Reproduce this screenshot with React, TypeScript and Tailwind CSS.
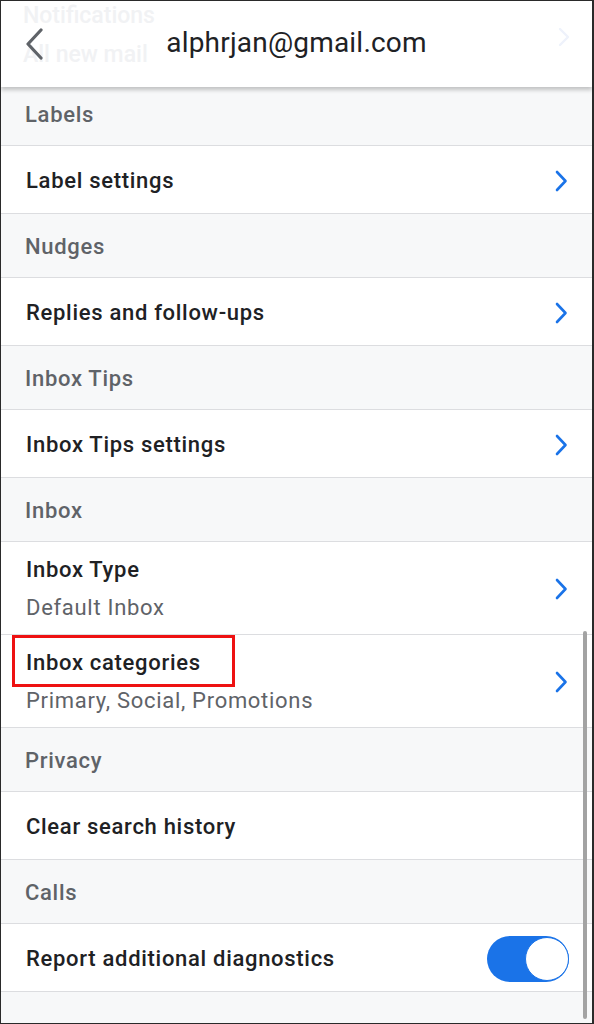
import React from "react";

const font = { fontFamily: "Roboto, 'Noto Sans', sans-serif" };

function Chevron() {
  return (
    <svg width="14" height="22" viewBox="0 0 14 22" fill="none" className="shrink-0">
      <path d="M3 2 L11.5 11 L3 20" stroke="#1a73e8" strokeWidth="2.6" strokeLinecap="round" strokeLinejoin="round" />
    </svg>
  );
}

function Section({ title }: { title: string }) {
  return (
    <div className="h-[64px] flex items-center px-[24px] pt-[2px] bg-[#f7f8f9] border-b border-[#dcdde0]">
      <span className="text-[22px] font-medium text-[#5f6368] tracking-[0.7px]">{title}</span>
    </div>
  );
}

function Row({ title, sub, chevron = true, children }: { title: string; sub?: string; chevron?: boolean; children?: React.ReactNode }) {
  return (
    <div className={`${sub ? "h-[93px]" : "h-[68px]"} flex items-center justify-between pl-[25px] pr-[24px] pt-[2px] bg-white border-b border-[#dcdde0]`}>
      <div className="flex flex-col gap-[10px]">
        <span className="text-[22px] font-medium text-[#202124] leading-[28px] tracking-[0.7px]">{title}</span>
        {sub && <span className="text-[22px] text-[#5f6368] leading-[28px] tracking-[0.7px]">{sub}</span>}
      </div>
      {children ?? (chevron ? <Chevron /> : null)}
    </div>
  );
}

export default function App() {
  return (
    <div style={font} className="relative w-[594px] h-[1024px] overflow-hidden bg-[#f7f8f9] border-t border-l border-b border-r-2 border-[#2a2a2a]">
      {/* Header */}
      <div className="relative z-10 h-[86px] bg-white shadow-[0_3px_4px_rgba(0,0,0,0.22)] flex items-center justify-center">
        <div className="absolute left-[22px] top-[1px] text-[23px] font-medium text-[#f1f2f4] leading-[28px]">Notifications</div>
        <div className="absolute left-[22px] top-[40px] text-[23px] font-medium text-[#f1f2f4] leading-[28px]">All new mail</div>
        <svg className="absolute right-[22px] top-[26px]" width="12" height="20" viewBox="0 0 12 20" fill="none">
          <path d="M2 2 L10 10 L2 18" stroke="#eef2fb" strokeWidth="2.4" strokeLinecap="round" strokeLinejoin="round" />
        </svg>
        <svg className="absolute left-[22px] top-[27px]" width="22" height="32" viewBox="0 0 22 32" fill="none">
          <path d="M18 2 L5 16 L18 30" stroke="#5f6368" strokeWidth="3.2" strokeLinecap="round" strokeLinejoin="round" />
        </svg>
        <span className="text-[28px] text-[#202124] tracking-[0.2px] -mt-[2px]">alphrjan@gmail.com</span>
      </div>

      <div className="-mt-[5px]">
        <Section title="Labels" />
        <Row title="Label settings" />
        <Section title="Nudges" />
        <Row title="Replies and follow-ups" />
        <Section title="Inbox Tips" />
        <Row title="Inbox Tips settings" />
        <Section title="Inbox" />
        <Row title="Inbox Type" sub="Default Inbox" />
        <Row title="Inbox categories" sub="Primary, Social, Promotions" />
        <Section title="Privacy" />
        <Row title="Clear search history" chevron={false} />
        <Section title="Calls" />
        <Row title="Report additional diagnostics">
          <div className="w-[82px] h-[46px] rounded-full bg-[#1a73e8] flex items-center justify-end -mr-[1px]">
            <div className="w-[44px] h-[44px] rounded-full bg-white border-[1.5px] border-[#1a73e8]" />
          </div>
        </Row>
      </div>

      {/* Scrollbar */}
      <div className="absolute right-[5px] top-[630px] w-[4px] h-[388px] rounded-full bg-[#a3a3a3]" />

      {/* Red annotation box */}
      <div className="absolute left-[11px] top-[634px] w-[223px] h-[52px] border-[3px] border-[#ee1111]" />
    </div>
  );
}
